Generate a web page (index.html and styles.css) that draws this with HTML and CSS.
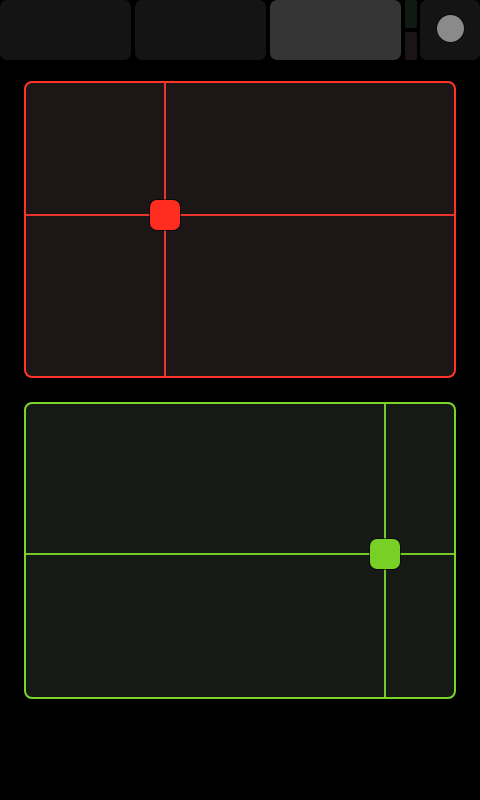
FILE: index.html
```html
<!DOCTYPE html>
<html>
<head>
<meta charset="utf-8">
<link rel="stylesheet" href="styles.css">
</head>
<body>
<div class="toolbar">
  <div class="btn"></div>
  <div class="btn"></div>
  <div class="btn btn-active"></div>
  <div class="meters">
    <div class="meter meter-green"></div>
    <div class="meter meter-red"></div>
  </div>
  <div class="btn btn-small"><span class="dot"></span></div>
</div>
<div class="pads">
  <div class="pad pad-red">
    <div class="vline" style="left: 138px"></div>
    <div class="hline" style="top: 131px"></div>
    <div class="handle" style="left: 138px; top: 131px"></div>
  </div>
  <div class="pad pad-green">
    <div class="vline" style="left: 358px"></div>
    <div class="hline" style="top: 149px"></div>
    <div class="handle" style="left: 358px; top: 149px"></div>
  </div>
</div>
</body>
</html>
```
FILE: styles.css
```css
html, body {
  margin: 0;
  padding: 0;
  background: #000;
  width: 480px;
  height: 800px;
  overflow: hidden;
  font-family: "Liberation Sans", Arial, sans-serif;
}
.toolbar {
  display: flex;
  gap: 4px;
  height: 60px;
}
.btn {
  flex: 0 0 131px;
  height: 60px;
  background: #141414;
  border-radius: 7px;
}
.btn-active {
  background: #353535;
}
.meters {
  flex: 0 0 12px;
  display: flex;
  flex-direction: column;
  gap: 4px;
  margin-right: -1px;
}
.meter {
  flex: 1;
  border-radius: 2px;
}
.meter-green { background: #111a12; }
.meter-red { background: #1b1515; }
.btn-small {
  flex: 0 0 60px;
  display: flex;
  align-items: center;
  justify-content: center;
}
.dot {
  width: 27px;
  height: 27px;
  border-radius: 50%;
  background: #8a8a8a;
  box-shadow: 0 0 0 1px rgba(0,0,0,0.4);
  margin-top: -4px;
}
.pads {
  display: flex;
  flex-direction: column;
  gap: 24px;
  padding: 21px 24px 0;
}
.pad {
  position: relative;
  box-sizing: border-box;
  height: 297px;
  border: 2px solid;
  border-radius: 8px;
  overflow: hidden;
}
.pad-red {
  border-color: #ff3428;
  background: #1c1617;
  color: #ff2c20;
}
.pad-green {
  border-color: #7ed32a;
  background: #151a15;
  color: #78cf25;
}
.pad-red .vline, .pad-red .hline { background: #e8352b; }
.pad-green .vline, .pad-green .hline { background: #72c828; }
.vline {
  position: absolute;
  top: 0;
  bottom: 0;
  width: 1.5px;
}
.hline {
  position: absolute;
  left: 0;
  right: 0;
  height: 1.5px;
}
.handle {
  position: absolute;
  width: 30px;
  height: 30px;
  margin: -14px 0 0 -14px;
  border-radius: 7px;
  background: currentColor;
  box-shadow: 0 0 0 1px rgba(0,0,0,0.6);
}
```
